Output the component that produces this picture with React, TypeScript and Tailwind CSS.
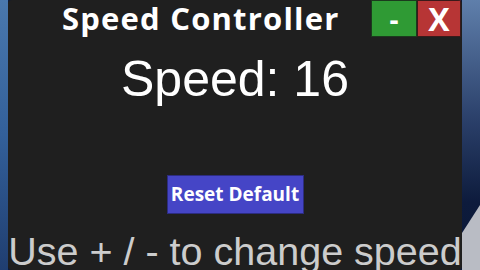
import React from "react";

const title = { fontFamily: '"Open Sans", "Noto Sans", sans-serif' };
const arial = { fontFamily: '"Liberation Sans", Arial, sans-serif' };

export default function App() {
  return (
    <div className="flex h-[270px] w-[480px] overflow-hidden bg-[#0d1a3a]">
      {/* sky on the left */}
      <div className="h-full w-[8px] bg-gradient-to-b from-[#4a78ad] via-[#33609a] to-[#203e70]" />

      {/* window */}
      <div className="flex h-[270px] w-[454px] flex-col overflow-hidden rounded-[4px] bg-[#1f1f1f]">
        <div className="flex h-[37px] items-start">
          <div
            className="flex-1 pl-[54px] text-[31px] font-bold leading-[36px] tracking-[1.2px] text-white whitespace-nowrap"
            style={title}
          >
            Speed Controller
          </div>
          <button
            className="flex h-[37px] w-[46px] items-center justify-center border border-[#1b3a1d] bg-[#2f9a34] text-[28px] font-bold text-white"
            style={title}
          >
            -
          </button>
          <button
            className="mr-[1px] flex h-[37px] w-[44px] items-center justify-center border border-[#3a1a1a] bg-[#b73535] text-[32px] font-bold leading-none text-white"
            style={title}
          >
            X
          </button>
        </div>

        <div className="mt-[17px] h-[50px] text-center text-[50px] leading-[50px] text-white" style={arial}>
          Speed: 16
        </div>

        <div className="mt-[71px] flex justify-center">
          <button
            className="flex h-[39px] w-[137px] items-center justify-center border border-[#2c2c80] bg-[#4545c6] text-[19px] font-bold text-white"
            style={title}
          >
            Reset Default
          </button>
        </div>

        <div
          className="mt-[18px] h-[39px] text-center text-[39.5px] leading-[39px] text-[#cccccc] whitespace-nowrap"
          style={arial}
        >
          Use + / - to change speed
        </div>
      </div>

      {/* scene on the right */}
      <svg width="18" height="270" viewBox="0 0 18 270" className="shrink-0">
        <defs>
          <linearGradient id="sky" x1="0" y1="0" x2="0" y2="1">
            <stop offset="0" stopColor="#5f7fab" />
            <stop offset="0.45" stopColor="#2a3f69" />
            <stop offset="0.75" stopColor="#0d1b3c" />
            <stop offset="1" stopColor="#0b1836" />
          </linearGradient>
        </defs>
        <rect x="0" y="0" width="18" height="270" fill="url(#sky)" />
        <polygon points="0,233 18,205 18,270 0,270" fill="#b9bcc4" />
      </svg>
    </div>
  );
}
